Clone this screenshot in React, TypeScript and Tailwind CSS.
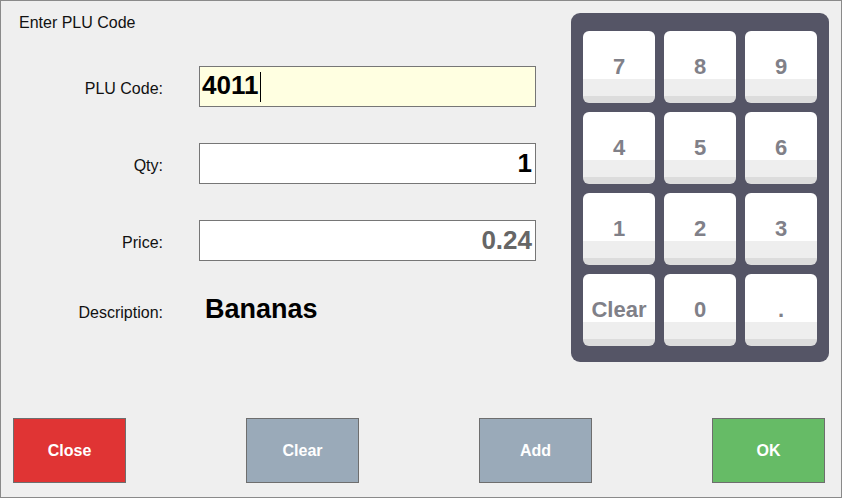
import React from "react";

const keys = ["7", "8", "9", "4", "5", "6", "1", "2", "3", "Clear", "0", "."];

function Key({ label }: { label: string }) {
  return (
    <button className="w-[72px] h-[72px] rounded-[6px] flex items-center justify-center pb-[2px] text-[22px] font-bold text-[#808088] bg-[linear-gradient(to_bottom,#ffffff_0px,#ffffff_48px,#eeeeee_48px,#eeeeee_65px,#dcdcdc_65px,#dcdcdc_72px)]">
      {label}
    </button>
  );
}

function Row({ label, children }: { label: string; children: React.ReactNode }) {
  return (
    <div className="flex items-center h-[41px]">
      <div className="w-[162px] text-right text-[16px] text-[#111] pt-[5px]">{label}</div>
      <div className="ml-[36px]">{children}</div>
    </div>
  );
}

export default function App() {
  return (
    <div
      className="w-[842px] h-[498px] bg-[#efefef] border border-[#8a8a8a] flex flex-col overflow-hidden"
      style={{ fontFamily: '"Liberation Sans", Arial, sans-serif' }}
    >
      <div className="flex">
        <div className="w-[570px] flex flex-col">
          <div className="pt-[13px] pl-[18px] text-[16px] leading-[18px] text-[#111]">Enter PLU Code</div>
          <div className="mt-[34px] flex flex-col gap-[36px]">
            <Row label="PLU Code:">
              <div className="w-[337px] h-[41px] border border-[#767676] bg-[#ffffe1] flex items-center pl-[2px] pb-[2px] text-[26px] font-bold text-black">
                <span>4011</span>
                <span className="w-px h-[30px] bg-black ml-[2px] mt-[2px]"></span>
              </div>
            </Row>
            <Row label="Qty:">
              <div className="w-[337px] h-[41px] border border-[#767676] bg-white flex items-center justify-end pr-[3px] text-[26px] font-bold text-black">
                1
              </div>
            </Row>
            <Row label="Price:">
              <div className="w-[337px] h-[41px] border border-[#767676] bg-white flex items-center justify-end pr-[3px] text-[26px] font-bold text-[#666666]">
                0.24
              </div>
            </Row>
          </div>
          <div className="mt-[28px] flex items-baseline">
            <div className="w-[162px] text-right text-[16px] text-[#111]">Description:</div>
            <div className="ml-[42px] text-[27px] font-bold text-black">Bananas</div>
          </div>
        </div>
        <div className="mt-[12px] w-[258px] h-[349px] rounded-[9px] bg-[#555566] pt-[18px] pl-[12px]">
          <div className="grid grid-cols-[72px_72px_72px] gap-x-[9px] gap-y-[9px]">
            {keys.map((k) => (
              <Key key={k} label={k} />
            ))}
          </div>
        </div>
      </div>
      <div className="mt-auto pb-[14px] pl-[12px] flex gap-[120px]">
        <button className="w-[113px] h-[65px] border border-[#6e6e6e] bg-[#e03434] text-white font-bold text-[16px]">Close</button>
        <button className="w-[113px] h-[65px] border border-[#6e6e6e] bg-[#9aaab9] text-white font-bold text-[16px]">Clear</button>
        <button className="w-[113px] h-[65px] border border-[#6e6e6e] bg-[#9aaab9] text-white font-bold text-[16px]">Add</button>
        <button className="w-[113px] h-[65px] border border-[#6e6e6e] bg-[#66bb66] text-white font-bold text-[16px]">OK</button>
      </div>
    </div>
  );
}
